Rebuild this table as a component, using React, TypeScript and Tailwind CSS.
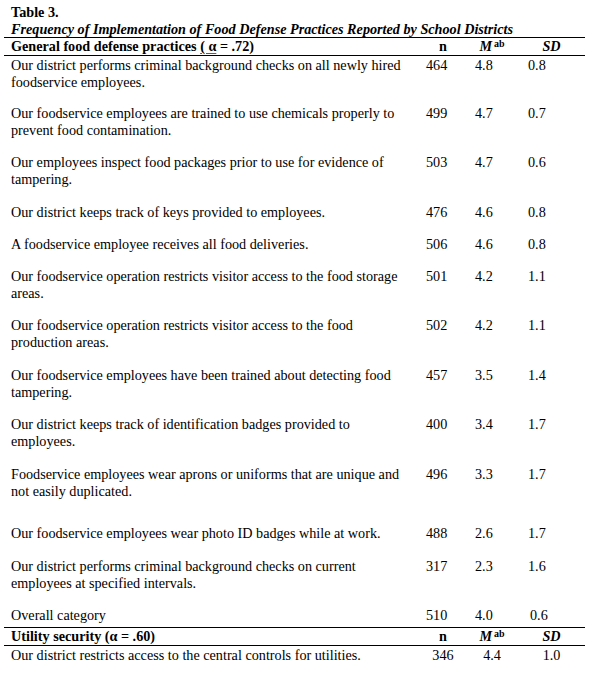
const rows: { text: string[]; n: string; m: string; sd: string; pb: string }[] = [
  {
    text: [
      "Our district performs criminal background checks on all newly hired",
      "foodservice employees.",
    ],
    n: "464",
    m: "4.8",
    sd: "0.8",
    pb: "pt-[1px] pb-[14px]",
  },
  {
    text: [
      "Our foodservice employees are trained to use chemicals properly to",
      "prevent food contamination.",
    ],
    n: "499",
    m: "4.7",
    sd: "0.7",
    pb: "pb-[15px]",
  },
  {
    text: [
      "Our employees inspect food packages prior to use for evidence of",
      "tampering.",
    ],
    n: "503",
    m: "4.7",
    sd: "0.6",
    pb: "pb-[16px]",
  },
  {
    text: ["Our district keeps track of keys provided to employees."],
    n: "476",
    m: "4.6",
    sd: "0.8",
    pb: "pb-[15px]",
  },
  {
    text: ["A foodservice employee receives all food deliveries."],
    n: "506",
    m: "4.6",
    sd: "0.8",
    pb: "pb-[15px]",
  },
  {
    text: [
      "Our foodservice operation restricts visitor access to the food storage",
      "areas.",
    ],
    n: "501",
    m: "4.2",
    sd: "1.1",
    pb: "pb-[15px]",
  },
  {
    text: [
      "Our foodservice operation restricts visitor access to the food",
      "production areas.",
    ],
    n: "502",
    m: "4.2",
    sd: "1.1",
    pb: "pb-[16px]",
  },
  {
    text: [
      "Our foodservice employees have been trained about detecting food",
      "tampering.",
    ],
    n: "457",
    m: "3.5",
    sd: "1.4",
    pb: "pb-[15px]",
  },
  {
    text: [
      "Our district keeps track of identification badges provided to",
      "employees.",
    ],
    n: "400",
    m: "3.4",
    sd: "1.7",
    pb: "pb-[16px]",
  },
  {
    text: [
      "Foodservice employees wear aprons or uniforms that are unique and",
      "not easily duplicated.",
    ],
    n: "496",
    m: "3.3",
    sd: "1.7",
    pb: "pb-[25px]",
  },
  {
    text: ["Our foodservice employees wear photo ID badges while at work."],
    n: "488",
    m: "2.6",
    sd: "1.7",
    pb: "pb-[16px]",
  },
  {
    text: [
      "Our district performs criminal background checks on current",
      "employees at specified intervals.",
    ],
    n: "317",
    m: "2.3",
    sd: "1.6",
    pb: "pb-[15px]",
  },
];

const grid = "grid grid-cols-[416px_46px_52px_67px]";

const HeaderCols = () => (
  <>
    <div className="text-center font-bold">n</div>
    <div className="text-center font-bold">
      <span className="italic">M</span>
      <span className="ml-[2px] align-top text-[10px] leading-[12px]">ab</span>
    </div>
    <div className="text-center font-bold italic">SD</div>
  </>
);

export default function App() {
  return (
    <div
      className="h-[674px] w-[594px] bg-white text-[14.2px] leading-[17px] text-black"
      style={{ fontFamily: '"Liberation Serif", "Times New Roman", serif' }}
    >
      <div className="ml-[4px] w-[581px] pt-[4px]">
        <div className="pl-[7px] font-bold">Table 3.</div>
        <div className="pl-[7px] font-bold italic leading-[16px]">
          Frequency of Implementation of Food Defense Practices Reported by School Districts
        </div>

        {/* general practices */}
        <div className={`${grid} border-y border-black`}>
          <div className="whitespace-nowrap pl-[7px] font-bold">
            General food defense practices{" "}
            <span className="underline decoration-[#2f5fbf] underline-offset-2">( α</span> = .72)
          </div>
          <HeaderCols />
        </div>

        {rows.map((r, i) => (
          <div key={i} className={`${grid} ${r.pb}`}>
            <div className="whitespace-nowrap pl-[7px]">
              {r.text.map((t, j) => (
                <div key={j}>{t}</div>
              ))}
            </div>
            <div className="pl-[6px]">{r.n}</div>
            <div className="pl-[9px]">{r.m}</div>
            <div className="pl-[10px]">{r.sd}</div>
          </div>
        ))}

        <div className={`${grid} pb-[3px]`}>
          <div className="pl-[7px]">Overall category</div>
          <div className="pl-[6px]">510</div>
          <div className="pl-[9px]">4.0</div>
          <div className="pl-[12px]">0.6</div>
        </div>

        {/* utility security */}
        <div className={`${grid} border-y border-black`}>
          <div className="pl-[7px] font-bold">Utility security (α = .60)</div>
          <HeaderCols />
        </div>
        <div className={`${grid} pt-[1px]`}>
          <div className="whitespace-nowrap pl-[7px]">
            Our district restricts access to the central controls for utilities.
          </div>
          <div className="text-center">346</div>
          <div className="text-center">4.4</div>
          <div className="text-center">1.0</div>
        </div>
      </div>
    </div>
  );
}
